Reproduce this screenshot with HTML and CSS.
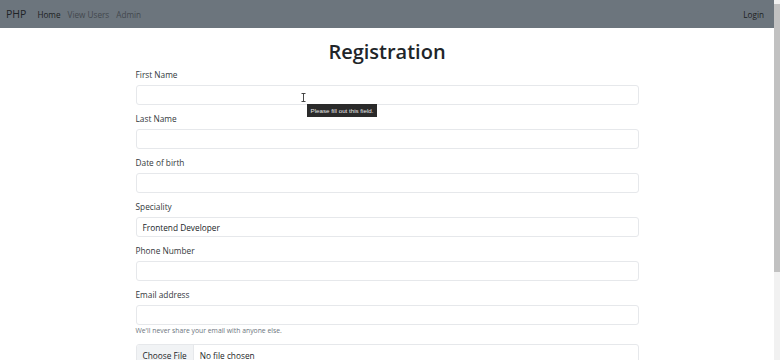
FILE: index.html
```html
<!DOCTYPE html>
<html lang="en">
    <head>
        <meta charset="UTF-8" />
        <meta name="viewport" content="width=device-width, initial-scale=1.0" />
        <title>Registration</title>
        <link rel="stylesheet" href="styles.css">
    </head>
    <body>
        <div class="page">
            <nav class="navbar">
                <a class="brand" href="#">PHP</a>
                <a class="nav-link active" href="#">Home</a>
                <a class="nav-link" href="#">View Users</a>
                <a class="nav-link" href="#">Admin</a>
                <a class="nav-link login" href="#">Login</a>
            </nav>

            <main class="container">
                <h1>Registration</h1>
                <form>
                    <div class="group">
                        <label for="first">First Name</label>
                        <div class="field">
                            <input id="first" type="text" required>
                            <svg class="ibeam" width="5" height="9" viewBox="0 0 5 9">
                                <path d="M0.5 0.5h4M0.5 8.5h4M2.5 0.5v8" stroke="#333" stroke-width="0.9" fill="none" />
                            </svg>
                            <span class="tooltip">Please fill out this field.</span>
                        </div>
                    </div>
                    <div class="group">
                        <label for="last">Last Name</label>
                        <input id="last" type="text">
                    </div>
                    <div class="group">
                        <label for="dob">Date of birth</label>
                        <input id="dob" type="text">
                    </div>
                    <div class="group">
                        <label for="spec">Speciality</label>
                        <div class="select">Frontend Developer</div>
                    </div>
                    <div class="group">
                        <label for="phone">Phone Number</label>
                        <input id="phone" type="text">
                    </div>
                    <div class="group">
                        <label for="email">Email address</label>
                        <input id="email" type="text">
                        <small class="help">We'll never share your email with anyone else.</small>
                    </div>
                    <div class="file">
                        <span class="file-btn">Choose File</span>
                        <span class="file-name">No file chosen</span>
                    </div>
                </form>
            </main>
        </div>
        <div class="scrollbar">
            <div class="thumb"></div>
        </div>
    </body>
</html>
```

FILE: styles.css
```css
* {
    margin: 0;
    padding: 0;
    box-sizing: border-box;
}
html,
body {
    height: 100%;
    overflow: hidden;
}
body {
    display: flex;
    font-family: 'Open Sans', 'Noto Sans', sans-serif;
    color: #212529;
    background: #fff;
}
.page {
    flex: 1;
    min-width: 0;
}
.navbar {
    display: flex;
    align-items: center;
    height: 28px;
    padding: 0 10px 0 6px;
    background: #6c757d;
}
.navbar a {
    text-decoration: none;
}
.brand {
    font-size: 10.5px;
    color: #1f2326;
    margin-right: 11px;
}
.nav-link {
    font-size: 8.2px;
    color: #43484d;
    margin-right: 7px;
}
.nav-link.active {
    color: #1c1f22;
}
.nav-link.login {
    margin-left: auto;
    margin-right: 0;
    color: #1c1f22;
}
.container {
    width: 503px;
    margin: 0 auto;
}
h1 {
    font-size: 20px;
    font-weight: 600;
    line-height: 26px;
    text-align: center;
    margin: 11px 0 4px;
}
.group {
    margin-bottom: 8px;
}
label {
    display: block;
    font-size: 8.3px;
    line-height: 12px;
    margin-bottom: 4px;
    color: #33383c;
}
.field {
    position: relative;
}
input,
.select {
    display: block;
    width: 100%;
    height: 20px;
    border: 1px solid #e6e8eb;
    border-radius: 3px;
    background: #fff;
    font-family: inherit;
    font-size: 8.3px;
    color: #212529;
}
.select {
    display: flex;
    align-items: center;
    padding-left: 6px;
}
.ibeam {
    position: absolute;
    left: 165px;
    top: 8px;
}
.tooltip {
    position: absolute;
    left: 171px;
    top: 19px;
    padding: 2px 4px;
    background: #2a2a2a;
    color: #e8e8e8;
    font-family: 'Liberation Sans', Arial, sans-serif;
    font-size: 6.2px;
    line-height: 9px;
    white-space: nowrap;
}
.help {
    display: block;
    margin-top: 1px;
    font-size: 6.8px;
    line-height: 10px;
    color: #6c757d;
}
.group:last-of-type {
    margin-bottom: 9px;
}
.file {
    display: flex;
    align-items: center;
    height: 22px;
    border: 1px solid #e6e8eb;
    border-radius: 3px;
    font-size: 8.3px;
    overflow: hidden;
}
.file-btn {
    display: flex;
    align-items: center;
    height: 100%;
    padding: 0 6px;
    background: #f1f3f5;
    border-right: 1px solid #e6e8eb;
}
.file-name {
    padding-left: 6px;
}
.scrollbar {
    width: 6px;
    height: 100%;
    background: #f1f1f1;
    padding-top: 4px;
}
.thumb {
    height: 268px;
    background: #c1c1c1;
}
```
